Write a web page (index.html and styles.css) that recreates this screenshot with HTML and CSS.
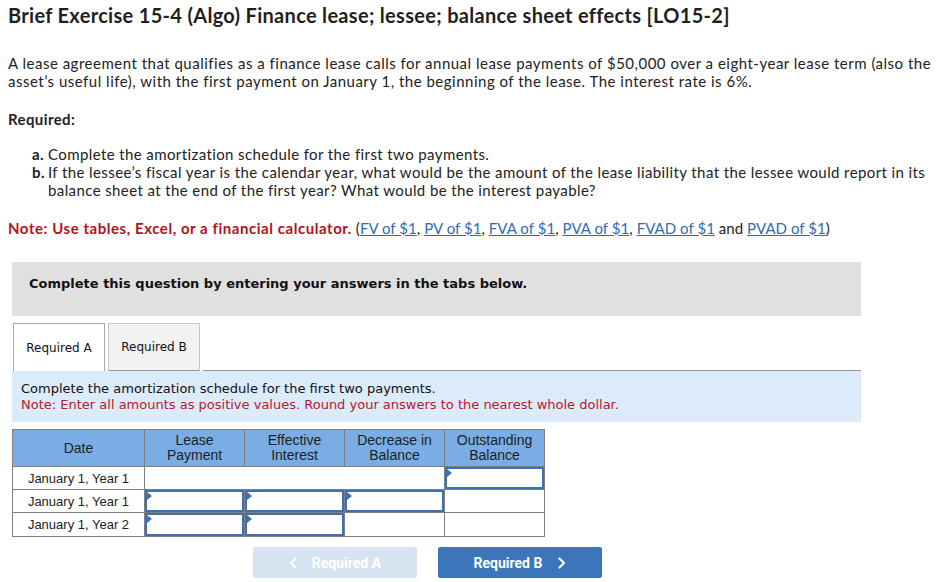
FILE: index.html
```html
<!DOCTYPE html>
<html>
<head>
<meta charset="utf-8">
<link rel="stylesheet" href="styles.css">
</head>
<body>
<div class="page">
  <h1 class="title">Brief Exercise 15-4 (Algo) Finance lease; lessee; balance sheet effects [LO15-2]</h1>
  <p class="intro">A lease agreement that qualifies as a finance lease calls for annual lease payments of $50,000 over a eight-year lease term (also the asset’s useful life), with the first payment on January 1, the beginning of the lease. The interest rate is 6%.</p>
  <p class="required">Required:</p>
  <ol class="reqlist">
    <li><span class="lbl">a.</span><span>Complete the amortization schedule for the first two payments.</span></li>
    <li><span class="lbl">b.</span><span>If the lessee’s fiscal year is the calendar year, what would be the amount of the lease liability that the lessee would report in its balance sheet at the end of the first year? What would be the interest payable?</span></li>
  </ol>
  <p class="note"><b>Note: Use tables, Excel, or a financial calculator.</b> <span class="links">(<a href="#">FV of $1</a>, <a href="#">PV of $1</a>, <a href="#">FVA of $1</a>, <a href="#">PVA of $1</a>, <a href="#">FVAD of $1</a> and <a href="#">PVAD of $1</a>)</span></p>

  <div class="question">
    <div class="instruct">Complete this question by entering your answers in the tabs below.</div>
    <div class="tabs">
      <div class="tab active">Required A</div>
      <div class="tab">Required B</div>
      <div class="tabline"></div>
    </div>
    <div class="panel">
      <div>Complete the amortization schedule for the first two payments.</div>
      <div class="panelnote">Note: Enter all amounts as positive values. Round your answers to the nearest whole dollar.</div>
    </div>
    <table class="sched">
      <colgroup><col class="c-date"><col class="c-n"><col class="c-n"><col class="c-n"><col class="c-n"></colgroup>
      <thead>
        <tr><th>Date</th><th>Lease<br>Payment</th><th>Effective<br>Interest</th><th>Decrease in<br>Balance</th><th>Outstanding<br>Balance</th></tr>
      </thead>
      <tbody>
        <tr><td class="d">January 1, Year 1</td><td colspan="3"></td><td class="in"><div class="box"></div></td></tr>
        <tr><td class="d">January 1, Year 1</td><td class="in"><div class="box"></div></td><td class="in"><div class="box"></div></td><td class="in"><div class="box"></div></td><td></td></tr>
        <tr><td class="d">January 1, Year 2</td><td class="in"><div class="box"></div></td><td class="in"><div class="box"></div></td><td></td><td></td></tr>
      </tbody>
    </table>
    <div class="nav">
      <div class="btn prev"><svg class="chev" width="8" height="12" viewBox="0 0 8 12"><path d="M6.5 1.5 L2 6 L6.5 10.5" fill="none" stroke="#fff" stroke-width="2.2" stroke-linecap="round" stroke-linejoin="round"/></svg>Required A</div>
      <div class="btn next">Required B<svg class="chev r" width="8" height="12" viewBox="0 0 8 12"><path d="M1.5 1.5 L6 6 L1.5 10.5" fill="none" stroke="#fff" stroke-width="2.2" stroke-linecap="round" stroke-linejoin="round"/></svg></div>
    </div>
  </div>
</div>
</body>
</html>
```

FILE: styles.css
```css
html, body { margin: 0; padding: 0; background: #fff; }
.page { padding: 4px 8px 0 8px; font-family: Lato, "Open Sans", sans-serif; color: #222; }
.title { font-size: 20px; letter-spacing: 0.31px; font-weight: 700; line-height: 22px; margin: 0; color: #1f1f1f; }
.intro { font-size: 15px; letter-spacing: 0.5px; line-height: 18px; margin: 28px 0 0 0; }
.required { font-size: 15px; letter-spacing: 0.4px; font-weight: 700; line-height: 18px; margin: 20px 0 0 0; }
.reqlist { list-style: none; margin: 17px 0 0 0; padding: 0 0 0 24px; font-size: 15px; letter-spacing: 0.4px; line-height: 18px; }
.reqlist li { display: flex; }
.reqlist .lbl { font-weight: 700; width: 16px; flex: none; }
.note { font-size: 15px; line-height: 18px; margin: 20px 0 0 0; }
.note b { color: #b3121b; letter-spacing: 0.55px; }
.note .links { letter-spacing: 0.05px; }
.note a { color: #2e6db4; text-decoration: underline; }
.question { margin: 25px 0 0 4px; width: 849px; font-family: "DejaVu Sans", Verdana, sans-serif; }
.instruct { background: #e0e0e0; height: 54px; box-sizing: border-box; padding: 14px 17px; font-size: 13px; font-weight: 700; color: #111; }
.tabs { display: flex; align-items: flex-end; margin-top: 7px; height: 48px; }
.tab { box-sizing: border-box; width: 92px; height: 48px; border: 1px solid #c8c8c8; border-bottom: 1px solid #999; background: #f2f2f2; font-size: 12px; color: #111; display: flex; align-items: center; justify-content: center; margin-right: 3px; }
.tab.active { background: #fff; border-color: #a8a8a8; border-bottom: none; margin-left: 1px; }
.tabline { flex: 1; border-bottom: 1px solid #999; }
.panel { background: #dcebf9; height: 51px; box-sizing: border-box; padding: 10px 9px; font-size: 13px; line-height: 16px; color: #111; }
.panelnote { color: #b3202a; }
.sched { margin-top: 7px; border-collapse: collapse; font-family: "Liberation Sans", Arial, sans-serif; font-size: 13px; color: #222; table-layout: fixed; width: 532px; }
.c-date { width: 132px; }
.c-n { width: 100px; }
.sched th, .sched td { border: 1px solid #808080; padding: 0; }
.sched th { background: #7aade4; height: 36px; font-weight: 400; font-size: 14px; line-height: 15px; color: #1a1f26; }
.sched td { height: 22px; }
.sched tbody tr:last-child td { height: 23px; }
.sched td.d { text-align: center; }
.sched td.in { position: relative; }
.box { position: absolute; left: 0; top: 0; right: 0; bottom: 0; border: 2px solid #3b70b2; }
.box::before { content: ""; position: absolute; left: 0; top: 0; border-left: 5px solid #3b70b2; border-top: 4px solid transparent; border-bottom: 4px solid transparent; }
.nav { display: flex; gap: 21px; margin-top: 10px; padding-left: 241px; font-family: Roboto, "Liberation Sans", sans-serif; }
.btn { width: 164px; height: 31px; border-radius: 2px; color: #fff; font-weight: 700; font-size: 14px; display: flex; align-items: center; justify-content: center; }
.btn.prev { background: #d6e3f1; }
.btn.next { background: #3a76b9; }
.chev { flex: none; margin-right: 15px; }
.chev.r { margin-right: 0; margin-left: 16px; }
```
